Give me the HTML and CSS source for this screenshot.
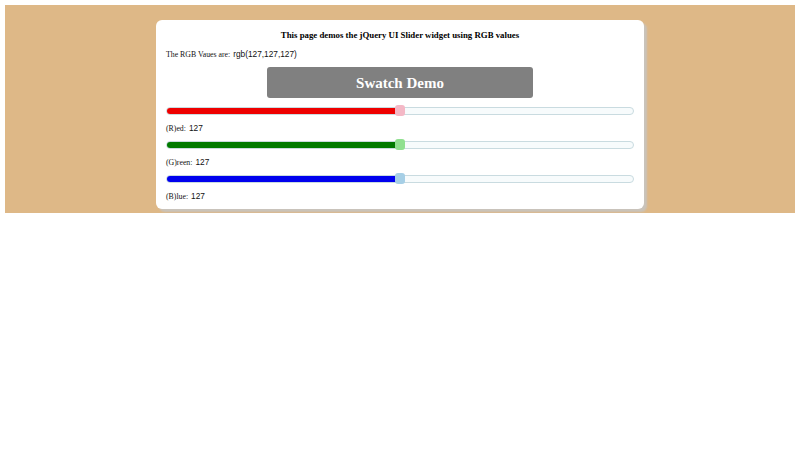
FILE: index.html
```html
<!DOCTYPE html>
<html>
<head>
<meta charset="utf-8">
<link rel="stylesheet" href="styles.css">
</head>
<body>
<div class="stage">
  <div class="card">
    <h1 class="title">This page demos the jQuery UI Slider widget using RGB values</h1>
    <div class="line first"><span class="lbl">The RGB Vaues are:</span><span class="val">rgb(127,127,127)</span></div>
    <div class="swatch">Swatch Demo</div>
    <div class="slider"><div class="fill red" style="width:50%"></div><span class="handle h-red" style="left:50%"></span></div>
    <div class="line"><span class="lbl">(R)ed:</span><span class="val">127</span></div>
    <div class="slider"><div class="fill green" style="width:50%"></div><span class="handle h-green" style="left:50%"></span></div>
    <div class="line"><span class="lbl">(G)reen:</span><span class="val">127</span></div>
    <div class="slider"><div class="fill blue" style="width:50%"></div><span class="handle h-blue" style="left:50%"></span></div>
    <div class="line"><span class="lbl">(B)lue:</span><span class="val">127</span></div>
  </div>
</div>
</body>
</html>
```
FILE: styles.css
```css
html, body { margin: 0; padding: 0; background: #fff; }
body { margin: 5px; font-family: "Liberation Serif", serif; }
.stage {
  background: #deb887;
  padding: 15px 0 4px;
}
.card {
  width: 468px;
  margin: 0 auto;
  background: #fff;
  border-radius: 6px;
  box-shadow: 3px 3px 2px #c9c3bb;
  padding: 9px 10px 9px;
}
.title {
  margin: 0;
  font-size: 8.8px;
  font-weight: bold;
  text-align: center;
  line-height: 12px;
}
.line {
  margin-top: 5px;
  height: 12px;
  line-height: 12px;
  color: #111;
}
.lbl { font-family: "Liberation Serif", serif; font-size: 7.8px; }
.val { font-family: "Liberation Sans", sans-serif; font-size: 8.3px; margin-left: 3px; }
.swatch {
  width: 266px;
  height: 31px;
  margin: 9px auto 0;
  background: #808080;
  border-radius: 3px;
  color: #fff;
  font-weight: bold;
  font-size: 15px;
  line-height: 32px;
  text-align: center;
}
.slider {
  position: relative;
  height: 6px;
  margin-top: 9px;
  border: 1px solid #c9dbe0;
  border-radius: 5px;
  background: #f7fbfc;
}
.fill {
  height: 100%;
  border-radius: 5px 0 0 5px;
}
.red { background: #ee0000; }
.green { background: #007a00; }
.blue { background: #0000ee; }
.handle {
  position: absolute;
  top: -3px;
  width: 10px;
  height: 11px;
  margin-left: -5px;
  border-radius: 3px;
}
.h-red { background: #f4b8c6; }
.h-green { background: #90e090; }
.h-blue { background: #a6cfe6; }
```
